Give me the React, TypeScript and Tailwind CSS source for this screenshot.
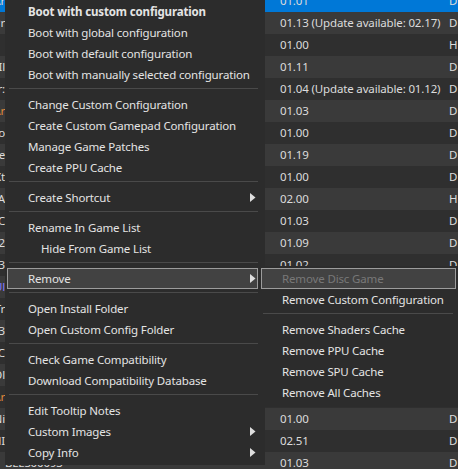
import React from "react";

type MenuEntry =
  | { label: string; bold?: boolean; indent?: boolean; arrow?: boolean; active?: boolean; disabled?: boolean }
  | "sep";

interface IRow {
  tail: string;
  tailColor?: string;
  serial?: string;
  version: string;
  cat: string;
}

// rows 13-18 sit under the Remove submenu, so they carry no text
const rows: IRow[] = [
  { tail: "Ar", version: "01.01", cat: "D" },
  { tail: "Pr", version: "01.13 (Update available: 02.17)", cat: "D" },
  { tail: "", version: "01.00", cat: "H" },
  { tail: "Il", version: "01.11", cat: "D" },
  { tail: "r:", version: "01.04 (Update available: 01.12)", cat: "D" },
  { tail: "Ar", tailColor: "text-[#e08a3c]", version: "01.03", cat: "D" },
  { tail: "Do", version: "01.00", cat: "D" },
  { tail: "Ze", version: "01.19", cat: "D" },
  { tail: "Xt", version: "01.00", cat: "D" },
  { tail: "TA", version: "02.00", cat: "H" },
  { tail: "OC", version: "01.03", cat: "D" },
  { tail: "I2", version: "01.09", cat: "D" },
  { tail: "I3", version: "01.02", cat: "D" },
  { tail: "Ul", tailColor: "text-[#8a7cff]", version: "", cat: "" },
  { tail: "Tr", version: "", cat: "" },
  { tail: "B3", version: "", cat: "" },
  { tail: "DC", version: "", cat: "" },
  { tail: "Ol", version: "", cat: "" },
  { tail: "Ar", tailColor: "text-[#e08a3c]", version: "", cat: "" },
  { tail: "Ni", version: "01.00", cat: "D" },
  { tail: "HI", version: "02.51", cat: "D" },
  { tail: "", serial: "BLES00093", version: "01.03", cat: "D" },
];

const mainMenu: MenuEntry[] = [
  { label: "Boot with custom configuration", bold: true },
  { label: "Boot with global configuration" },
  { label: "Boot with default configuration" },
  { label: "Boot with manually selected configuration" },
  "sep",
  { label: "Change Custom Configuration" },
  { label: "Create Custom Gamepad Configuration" },
  { label: "Manage Game Patches" },
  { label: "Create PPU Cache" },
  "sep",
  { label: "Create Shortcut", arrow: true },
  "sep",
  { label: "Rename In Game List" },
  { label: "Hide From Game List", indent: true },
  "sep",
  { label: "Remove", arrow: true, active: true },
  "sep",
  { label: "Open Install Folder" },
  { label: "Open Custom Config Folder" },
  "sep",
  { label: "Check Game Compatibility" },
  { label: "Download Compatibility Database" },
  "sep",
  { label: "Edit Tooltip Notes" },
  { label: "Custom Images", arrow: true },
  { label: "Copy Info", arrow: true },
];

const removeMenu: MenuEntry[] = [
  { label: "Remove Disc Game", disabled: true, active: true },
  { label: "Remove Custom Configuration" },
  "sep",
  { label: "Remove Shaders Cache" },
  { label: "Remove PPU Cache" },
  { label: "Remove SPU Cache" },
  { label: "Remove All Caches" },
];

function Arrow() {
  return (
    <svg width="6" height="9" viewBox="0 0 6 9" className="shrink-0">
      <path d="M0 0 L5.5 4.5 L0 9 Z" fill="#dedede" />
    </svg>
  );
}

function GameRow({ row, index }: { row: IRow; index: number }) {
  const bg = index === 0 ? "bg-[#0078d7]" : index % 2 === 1 ? "bg-[#3a3a3a]" : "bg-[#2f2f2f]";
  return (
    <div className={`flex h-[22px] items-center whitespace-nowrap text-[#dcdcdc] ${bg}`}>
      <div className={`flex w-[5px] shrink-0 justify-end overflow-hidden ${row.tailColor ?? ""}`}>
        <span>{row.tail}</span>
      </div>
      <div className="w-[188px] shrink-0">{row.serial}</div>
      <div className="w-[87px] shrink-0" />
      <div className="w-[169px] shrink-0">{row.version}</div>
      <div className="w-[9px] shrink-0 overflow-hidden">{row.cat}</div>
    </div>
  );
}

function MenuList({
  items,
  hlRight,
  sepRight,
}: {
  items: MenuEntry[];
  hlRight: string;
  sepRight: string;
}) {
  return (
    <>
      {items.map((item, i) => {
        if (item === "sep") {
          return (
            <div key={i} className={`ml-[4px] h-[9px] pt-[3px] ${sepRight}`}>
              <div className="h-px bg-[#4a4a4a]" />
            </div>
          );
        }
        const box = item.active
          ? "border-[#9c9c9c] bg-[#424242]"
          : "border-transparent";
        return (
          <div key={i} className={`ml-[2px] flex h-[21px] items-center border ${box} ${hlRight}`}>
            <span
              className={`flex-1 whitespace-nowrap ${item.indent ? "pl-[33px]" : "pl-[20px]"} ${
                item.bold ? "font-bold" : ""
              } ${item.disabled ? "text-[#787878]" : "text-[#e4e4e4]"}`}
            >
              {item.label}
            </span>
            {item.arrow && (
              <span className="pr-[1px]">
                <Arrow />
              </span>
            )}
          </div>
        );
      })}
    </>
  );
}

export default function App() {
  return (
    <div className="relative h-[469px] w-[458px] overflow-hidden bg-[#2b2b2b] font-['Segoe_UI','Noto_Sans',sans-serif] text-[11.5px] leading-none tracking-[-0.15px]">
      <div className="-mt-[10px] flex flex-col">
        {rows.map((row, i) => (
          <GameRow key={i} row={row} index={i} />
        ))}
      </div>

      <div className="absolute left-[5px] top-0 flex w-[260px] flex-col bg-[#2c2c2c] pt-[1px] pb-[2px]">
        <MenuList items={mainMenu} hlRight="mr-[7px]" sepRight="mr-[7px]" />
      </div>

      <div className="absolute left-[259px] top-[266px] flex w-[199px] flex-col bg-[#2c2c2c] pt-[2px] pb-[4px]">
        <MenuList items={removeMenu} hlRight="mr-[2px]" sepRight="mr-[5px]" />
      </div>
    </div>
  );
}
